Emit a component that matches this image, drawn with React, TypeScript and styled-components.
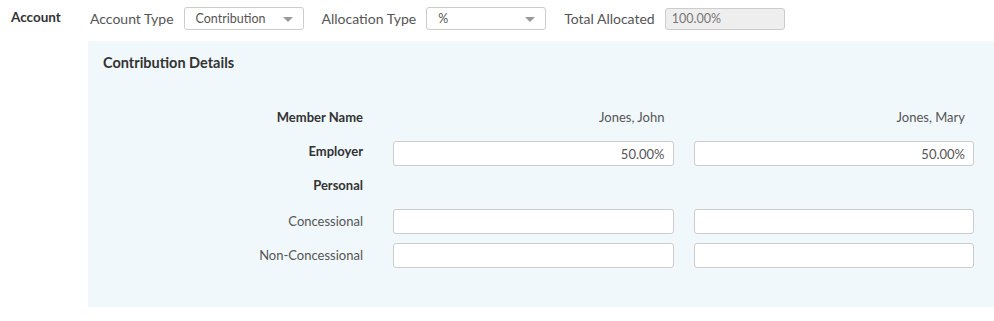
import React from "react";
import styled, { createGlobalStyle } from "styled-components";

const Global = createGlobalStyle`
  html, body { margin: 0; padding: 0; background: #fff; }
  body { font-family: Lato, "Liberation Sans", Arial, sans-serif; font-size: 13px; color: #555; }
  * { box-sizing: border-box; }
`;

const Page = styled.div`
  display: grid;
  grid-template-columns: 88px 1fr;
  width: 994px;
`;

const SectionLabel = styled.div`
  padding: 9px 0 0 11px;
  font-weight: 700;
  font-size: 13.5px;
  color: #333;
  line-height: 16px;
`;

const Main = styled.div`
  display: flex;
  flex-direction: column;
`;

const Toolbar = styled.div`
  display: flex;
  align-items: center;
  height: 41px;
  padding: 0 0 4px 2px;
`;

const FieldGroup = styled.div`
  display: flex;
  align-items: center;
  gap: 10px;
  margin-right: 18px;
`;

const FieldLabel = styled.span`
  color: #555;
  font-size: 14px;
`;

const SelectBox = styled.div<{ $w: number }>`
  position: relative;
  width: ${(p) => p.$w}px;
  height: 23px;
  border: 1px solid #ccc;
  border-radius: 3px;
  background: #fff;
  padding: 0 0 0 11px;
  display: flex;
  align-items: center;
  font-size: 12.5px;
  color: #555;
`;

const Caret = styled.span`
  position: absolute;
  right: 10px;
  top: 9px;
  width: 0;
  height: 0;
  border-left: 5px solid transparent;
  border-right: 5px solid transparent;
  border-top: 5px solid #999;
`;

const ReadonlyBox = styled.div`
  width: 120px;
  height: 22px;
  border: 1px solid #ccc;
  border-radius: 3px;
  background: #eee;
  padding: 0 6px;
  display: flex;
  align-items: center;
  font-size: 12.5px;
  color: #777;
`;

const Panel = styled.div`
  background: #f1f8fc;
  height: 266px;
  padding: 13px 20px 0 15px;
`;

const PanelTitle = styled.div`
  font-weight: 700;
  color: #333;
  font-size: 14.5px;
  line-height: 17px;
  margin-bottom: 34px;
`;

const Grid = styled.div`
  display: grid;
  grid-template-columns: 270px 1fr 1fr;
  column-gap: 20px;
  row-gap: 9px;
`;

const RowLabel = styled.div<{ $bold?: boolean; $h?: number; $lh?: number }>`
  padding-right: 10px;
  text-align: right;
  height: ${(p) => p.$h ?? 25}px;
  line-height: ${(p) => p.$lh ?? 25}px;
  font-weight: ${(p) => (p.$bold ? 700 : 400)};
  color: ${(p) => (p.$bold ? "#333" : "#555")};
`;

const NameCell = styled.div`
  text-align: right;
  padding-right: 9px;
  height: 27px;
  line-height: 25px;
  color: #555;
`;

const Empty = styled.div`
  height: 25px;
`;

const Input = styled.div`
  height: 25px;
  border: 1px solid #ccc;
  border-radius: 3px;
  background: #fff;
  padding: 0 8px;
  display: flex;
  align-items: center;
  justify-content: flex-end;
  color: #555;
`;

export default function App() {
  return (
    <>
      <Global />
      <Page>
        <SectionLabel>Account</SectionLabel>
        <Main>
          <Toolbar>
            <FieldGroup>
              <FieldLabel>Account Type</FieldLabel>
              <SelectBox $w={120}>
                Contribution
                <Caret />
              </SelectBox>
            </FieldGroup>
            <FieldGroup>
              <FieldLabel>Allocation Type</FieldLabel>
              <SelectBox $w={120}>
                %
                <Caret />
              </SelectBox>
            </FieldGroup>
            <FieldGroup>
              <FieldLabel>Total Allocated</FieldLabel>
              <ReadonlyBox>100.00%</ReadonlyBox>
            </FieldGroup>
          </Toolbar>
          <Panel>
            <PanelTitle>Contribution Details</PanelTitle>
            <Grid>
              <RowLabel $bold $h={27}>Member Name</RowLabel>
              <NameCell>Jones, John</NameCell>
              <NameCell>Jones, Mary</NameCell>

              <RowLabel $bold $lh={20}>Employer</RowLabel>
              <Input>50.00%</Input>
              <Input>50.00%</Input>

              <RowLabel $bold $lh={20}>Personal</RowLabel>
              <Empty />
              <Empty />

              <RowLabel>Concessional</RowLabel>
              <Input />
              <Input />

              <RowLabel>Non-Concessional</RowLabel>
              <Input />
              <Input />
            </Grid>
          </Panel>
        </Main>
      </Page>
    </>
  );
}
